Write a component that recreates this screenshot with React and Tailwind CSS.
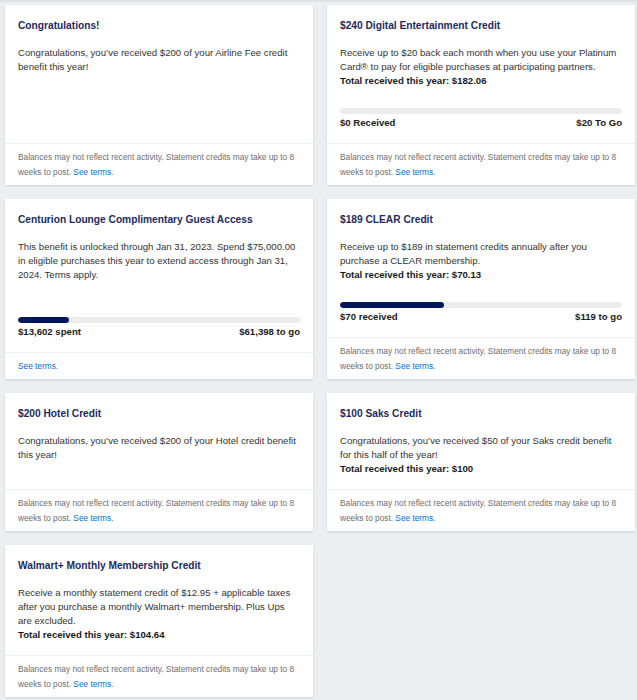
import React from "react";

const FONT = { fontFamily: '"Liberation Sans", Arial, sans-serif' };

const benefits = [
  {
    title: "Congratulations!",
    body: "Congratulations, you’ve received $200 of your Airline Fee credit benefit this year!",
  },
  {
    title: "$240 Digital Entertainment Credit",
    body: "Receive up to $20 back each month when you use your Platinum Card® to pay for eligible purchases at participating partners.",
    total: "$182.06",
    progress: { pct: 0, left: "$0 Received", right: "$20 To Go" },
  },
  {
    title: "Centurion Lounge Complimentary Guest Access",
    body: "This benefit is unlocked through Jan 31, 2023. Spend $75,000.00 in eligible purchases this year to extend access through Jan 31, 2024. Terms apply.",
    progress: { pct: 18.1, left: "$13,602 spent", right: "$61,398 to go" },
    termsOnly: true,
  },
  {
    title: "$189 CLEAR Credit",
    body: "Receive up to $189 in statement credits annually after you purchase a CLEAR membership.",
    total: "$70.13",
    progress: { pct: 37, left: "$70 received", right: "$119 to go" },
  },
  {
    title: "$200 Hotel Credit",
    body: "Congratulations, you’ve received $200 of your Hotel credit benefit this year!",
  },
  {
    title: "$100 Saks Credit",
    body: "Congratulations, you’ve received $50 of your Saks credit benefit for this half of the year!",
    total: "$100",
  },
  {
    title: "Walmart+ Monthly Membership Credit",
    body: "Receive a monthly statement credit of $12.95 + applicable taxes after you purchase a monthly Walmart+ membership. Plus Ups are excluded.",
    total: "$104.64",
  },
];

const Progress = ({ pct, left, right }) => (
  <div className="mt-auto pt-[20px]">
    <div className="h-[6px] w-full rounded-full bg-[#ececec] overflow-hidden">
      <div className="h-full rounded-full bg-[#00175a]" style={{ width: `${pct}%` }} />
    </div>
    <div className="mt-[2px] flex justify-between text-[9.6px] leading-[14px] font-bold text-[#1a1a1a]">
      <span>{left}</span>
      <span>{right}</span>
    </div>
  </div>
);

const BenefitCard = ({ item }) => (
  <div className="flex flex-col bg-white shadow-[0_1px_2px_rgba(0,0,0,0.12)]">
    <div className="flex-1 flex flex-col p-[13px]">
      <h3 className="text-[10.2px] leading-[16px] font-bold text-[#1b2a5e]">{item.title}</h3>
      <div className="mt-[12px] text-[9.6px] leading-[14px] text-[#333333]">
        <p>{item.body}</p>
        {item.total && (
          <p className="font-bold text-[#1a1a1a]">Total received this year: {item.total}</p>
        )}
      </div>
      {item.progress && <Progress {...item.progress} />}
    </div>
    <div className="border-t border-[#eeeff1] px-[13px] pt-[6px] pb-[5px] text-[8.3px] leading-[15px] text-[#6b6e72]">
      {item.termsOnly ? (
        <span className="text-[#006fcf]">See terms.</span>
      ) : (
        <>
          Balances may not reflect recent activity. Statement credits may take up to 8 weeks to post.{" "}
          <span className="text-[#006fcf]">See terms</span>.
        </>
      )}
    </div>
  </div>
);

export default function App() {
  return (
    <div
      className="min-h-screen bg-[#eceef1] border-t-2 border-[#dfe1e4] pt-[3px] pl-[5px]"
      style={FONT}
    >
      <div className="grid grid-cols-[308px_308px] gap-x-[14px] gap-y-[14px]">
        {benefits.map((b) => (
          <BenefitCard key={b.title} item={b} />
        ))}
      </div>
    </div>
  );
}
